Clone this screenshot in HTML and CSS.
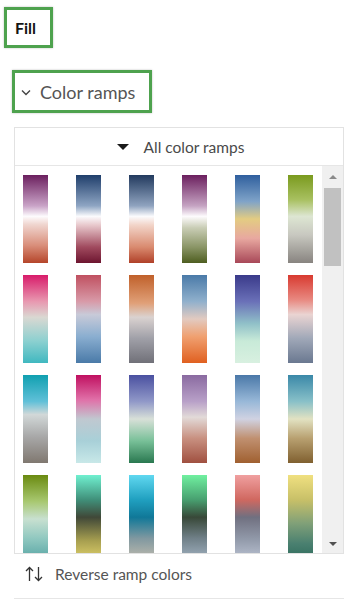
FILE: index.html
```html
<!DOCTYPE html>
<html lang="en">
<head>
    <meta charset="UTF-8">
    <meta name="viewport" content="width=device-width, initial-scale=1.0">
    <title>Fill - Color ramps</title>
    <link rel="stylesheet" href="styles.css">
</head>
<body>
    <div class="page">
        <div class="fill-label">Fill</div>

        <div class="ramps-toggle">
            <svg class="chevron" width="10" height="7" viewBox="0 0 10 7">
                <path d="M1 1.5 L5 5.5 L9 1.5" fill="none" stroke="#444" stroke-width="1.4"/>
            </svg>
            <span>Color ramps</span>
        </div>

        <div class="panel">
            <div class="panel-header">
                <span class="caret"></span>
                <span>All color ramps</span>
            </div>
            <div class="panel-body">
                <div class="ramp-grid">
                    <div class="ramp r1"></div>
                    <div class="ramp r2"></div>
                    <div class="ramp r3"></div>
                    <div class="ramp r4"></div>
                    <div class="ramp r5"></div>
                    <div class="ramp r6"></div>

                    <div class="ramp r7"></div>
                    <div class="ramp r8"></div>
                    <div class="ramp r9"></div>
                    <div class="ramp r10"></div>
                    <div class="ramp r11"></div>
                    <div class="ramp r12"></div>

                    <div class="ramp r13"></div>
                    <div class="ramp r14"></div>
                    <div class="ramp r15"></div>
                    <div class="ramp r16"></div>
                    <div class="ramp r17"></div>
                    <div class="ramp r18"></div>

                    <div class="ramp r19"></div>
                    <div class="ramp r20"></div>
                    <div class="ramp r21"></div>
                    <div class="ramp r22"></div>
                    <div class="ramp r23"></div>
                    <div class="ramp r24"></div>
                </div>
                <div class="scrollbar">
                    <div class="scroll-btn"><span class="arrow-up"></span></div>
                    <div class="thumb"></div>
                    <div class="track"></div>
                    <div class="scroll-btn"><span class="arrow-down"></span></div>
                </div>
            </div>
        </div>

        <div class="reverse-row">
            <svg class="reverse-icon" width="18" height="16" viewBox="0 0 18 16">
                <path d="M4.5 15 V1.5 M1 5 L4.5 1.5 L8 5" fill="none" stroke="#333" stroke-width="1.3"/>
                <path d="M13.5 1 V14.5 M10 11 L13.5 14.5 L17 11" fill="none" stroke="#333" stroke-width="1.3"/>
            </svg>
            <span>Reverse ramp colors</span>
        </div>
    </div>
</body>
</html>
```

FILE: styles.css
```css
body {
    margin: 0;
    padding: 0;
    background-color: #fff;
    font-family: Lato, "Noto Sans", sans-serif;
    color: #4a4a4a;
}

.page {
    width: 360px;
    height: 601px;
    overflow: hidden;
    padding-top: 7px;
    box-sizing: border-box;
}

.fill-label {
    margin-left: 4px;
    width: 49px;
    height: 41px;
    box-sizing: border-box;
    border: 3px solid #4ea24e;
    box-shadow: 0 0 2px rgba(0, 0, 0, 0.25);
    display: flex;
    align-items: center;
    padding-left: 8px;
    font-size: 16px;
    font-weight: bold;
    color: #151515;
}

.ramps-toggle {
    margin: 22px 0 0 12px;
    width: 140px;
    height: 43px;
    box-sizing: border-box;
    border: 3px solid #4ea24e;
    box-shadow: 0 0 2px rgba(0, 0, 0, 0.25);
    display: flex;
    align-items: center;
    padding-left: 6px;
    gap: 9px;
    font-size: 18px;
    color: #555;
}

.chevron {
    margin-top: 1px;
}

.panel {
    margin: 14px 0 0 14px;
    width: 330px;
    box-sizing: border-box;
    border: 1px solid #e2e2e2;
}

.panel-header {
    height: 37px;
    border-bottom: 1px solid #e6e6e6;
    display: flex;
    align-items: center;
    justify-content: center;
    gap: 15px;
    font-size: 15.5px;
    color: #4a4a4a;
    padding-left: 3px;
}

.caret {
    width: 0;
    height: 0;
    border-left: 6px solid transparent;
    border-right: 6px solid transparent;
    border-top: 6px solid #1a1a1a;
    margin-top: 1px;
}

.panel-body {
    display: flex;
    height: 387px;
}

.ramp-grid {
    flex: 1;
    overflow: hidden;
    display: grid;
    grid-template-columns: repeat(6, 25px);
    grid-auto-rows: 88px;
    column-gap: 28px;
    row-gap: 12px;
    padding: 9px 0 0 8px;
}

.scrollbar {
    width: 21px;
    background-color: #f0f0f0;
    display: flex;
    flex-direction: column;
}

.scroll-btn {
    height: 22px;
    display: flex;
    align-items: center;
    justify-content: center;
}

.arrow-up {
    width: 0;
    height: 0;
    border-left: 4px solid transparent;
    border-right: 4px solid transparent;
    border-bottom: 4px solid #8a8a8a;
}

.arrow-down {
    width: 0;
    height: 0;
    border-left: 4px solid transparent;
    border-right: 4px solid transparent;
    border-top: 4px solid #505050;
    margin-top: 4px;
}

.thumb {
    height: 78px;
    margin: 0 2px;
    background-color: #c1c1c1;
}

.track {
    flex: 1;
}

.reverse-row {
    margin-left: 14px;
    width: 330px;
    height: 45px;
    border-bottom: 1px solid #e6e6e6;
    display: flex;
    align-items: center;
    padding: 0 0 5px 11px;
    gap: 12px;
    box-sizing: border-box;
    font-size: 15.5px;
    color: #555;
}

/* ramps, row 1 */
.r1 { background: linear-gradient(#6b1f5e, #c9a3c7 35%, #fdfbfd 47%, #f0d6d0 56%, #d98e7a 80%, #b5452a); }
.r2 { background: linear-gradient(#1f3e6b, #8ea5c3 35%, #fbfbfd 47%, #e8c8cc 57%, #a04a5e 82%, #6d1530); }
.r3 { background: linear-gradient(#223a5e, #8fa3bf 35%, #fbfbfd 47%, #f2d4c8 57%, #d98a6f 82%, #b04028); }
.r4 { background: linear-gradient(#6b1f5e, #c5a3c2 35%, #fdfbfd 47%, #c9cdb5 60%, #8a9566 82%, #4e5e20); }
.r5 { background: linear-gradient(#2f5f9e, #7fa3c8 30%, #e3cc82 50%, #e8a8a0 72%, #a84858); }
.r6 { background: linear-gradient(#7a9a1e, #a8c060 28%, #dde6d2 47%, #c8c8c0 68%, #888480); }

/* row 2 */
.r7 { background: linear-gradient(#d81b6a, #e898b0 30%, #dad8d2 48%, #8cd0d0 75%, #40b8c0); }
.r8 { background: linear-gradient(#c05060, #d89aa8 30%, #c8cad8 45%, #8aaed0 70%, #4a7aa8); }
.r9 { background: linear-gradient(#c0602a, #e0a078 32%, #dad2d0 48%, #a0a0a8 72%, #707078); }
.r10 { background: linear-gradient(#4a7aa8, #90b0cc 30%, #e2cac0 50%, #f0a070 70%, #e06020); }
.r11 { background: linear-gradient(#3a3a8a, #6a70b8 30%, #90c0c8 55%, #c8ead8 75%, #d8f0e0); }
.r12 { background: linear-gradient(#d83a30, #e88880 28%, #ead4d2 45%, #a0a8b8 72%, #6a7890); }

/* row 3 */
.r13 { background: linear-gradient(#10a0b0, #60c0d8 30%, #d2d8d8 45%, #a8a8a8 70%, #807870); }
.r14 { background: linear-gradient(#c01060, #e070a8 28%, #c0c8d0 50%, #a8d0d8 75%, #c8e8e8); }
.r15 { background: linear-gradient(#4a50a0, #9098c8 30%, #d8e0d8 50%, #78c098 75%, #2a7850); }
.r16 { background: linear-gradient(#8a6aa0, #b8a0c8 30%, #e2dad8 48%, #c89080 72%, #a05040); }
.r17 { background: linear-gradient(#4a78a8, #98b8d8 30%, #d0d2e2 50%, #c09070 72%, #a06030); }
.r18 { background: linear-gradient(#3a88a8, #88c0c8 30%, #e2e2c2 50%, #b8a070 72%, #806030); }

/* row 4 */
.r19 { background: linear-gradient(#6a8a10, #a8c870 30%, #c8e0d0 50%, #90c8c0 72%, #50a0a0); }
.r20 { background: linear-gradient(#70f0d0, #40907a 28%, #404838 48%, #a8a050 75%, #e8d870); }
.r21 { background: linear-gradient(#60d8f0, #20a0c0 28%, #107898 48%, #8098a0 72%, #c8c0b0); }
.r22 { background: linear-gradient(#70f0a0, #48a070 28%, #384838 48%, #708088 72%, #a8b8c8); }
.r23 { background: linear-gradient(#f0a0a0, #d06860 28%, #707080 48%, #9098a8 72%, #c0c8d8); }
.r24 { background: linear-gradient(#f0e080, #c8c068 28%, #80a078 55%, #4a8070 78%, #2a6858); }
```
